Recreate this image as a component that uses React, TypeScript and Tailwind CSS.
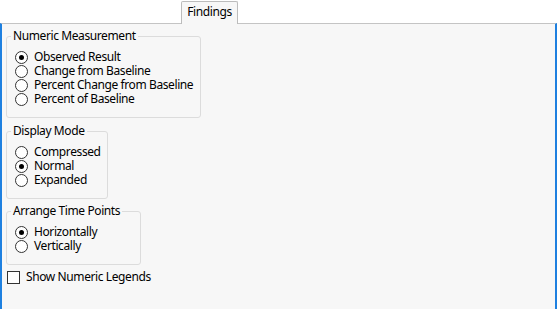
import React from "react";

type Option = { label: string; checked?: boolean };

const font = { fontFamily: '"Noto Sans", "Open Sans", sans-serif' };

function Radio({ label, checked }: Option) {
  return (
    <div className="flex h-[14px] items-center gap-[6px]">
      <span className="flex h-[13px] w-[13px] shrink-0 items-center justify-center rounded-full border border-[#333333] bg-white">
        {checked && <span className="h-[5px] w-[5px] rounded-full bg-black" />}
      </span>
      <span className="whitespace-nowrap leading-[14px]">{label}</span>
    </div>
  );
}

function Group({
  title,
  options,
  width,
  className,
}: {
  title: string;
  options: Option[];
  width: string;
  className?: string;
}) {
  return (
    <fieldset
      className={`ml-[4px] min-w-0 rounded-[3px] border border-[#dcdcdc] px-[4px] pb-[11px] ${width} ${className ?? ""}`}
    >
      <legend className="px-[2px] leading-[16px]">{title}</legend>
      <div className="mt-[6px] flex flex-col pl-[4px]">
        {options.map((o) => (
          <Radio key={o.label} {...o} />
        ))}
      </div>
    </fieldset>
  );
}

export default function App() {
  return (
    <div
      className="flex h-[309px] w-[557px] flex-col bg-white text-[12px] tracking-[-0.4px] text-black"
      style={font}
    >
      <div className="flex h-[23px] items-end">
        <div className="relative z-10 -mb-px ml-[181px] flex h-[23px] w-[57px] items-center justify-center rounded-t-[2px] border border-b-0 border-[#bcbcbc] bg-[#f7f7f7] pb-[2px]">
          Findings
        </div>
      </div>
      <div className="flex-1 border-x-2 border-t border-x-[#1e80e0] border-t-[#c4c4c4] bg-[#f7f7f7]">
        <Group
          title="Numeric Measurement"
          width="w-[195px]"
          className="mt-[4px]"
          options={[
            { label: "Observed Result", checked: true },
            { label: "Change from Baseline" },
            { label: "Percent Change from Baseline" },
            { label: "Percent of Baseline" },
          ]}
        />
        <Group
          title="Display Mode"
          width="w-[102px]"
          className="mt-[5px]"
          options={[
            { label: "Compressed" },
            { label: "Normal", checked: true },
            { label: "Expanded" },
          ]}
        />
        <Group
          title="Arrange Time Points"
          width="w-[135px]"
          className="mt-[4px]"
          options={[
            { label: "Horizontally", checked: true },
            { label: "Vertically" },
          ]}
        />
        <label className="ml-[5px] mt-[5px] flex h-[14px] items-center gap-[6px]">
          <span className="h-[13px] w-[13px] shrink-0 border border-[#333333] bg-white" />
          <span className="whitespace-nowrap">Show Numeric Legends</span>
        </label>
      </div>
    </div>
  );
}
